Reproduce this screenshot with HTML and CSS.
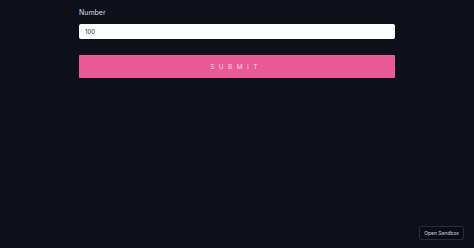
FILE: index.html
```html
<!DOCTYPE html>
<html lang="en">
<head>
    <meta charset="UTF-8">
    <meta name="viewport" content="width=device-width, initial-scale=1.0">
    <title>Number Form</title>
    <link rel="stylesheet" href="styles.css">
</head>
<body>
    <form class="form">
        <label for="number">Number</label>
        <input type="text" id="number" value="100">
        <button type="submit" class="btn">Submit</button>
    </form>

    <a href="#" class="sandbox-link">Open Sandbox</a>
</body>
</html>
```

FILE: styles.css
```css
body {
    font-family: Inter, 'Liberation Sans', sans-serif;
    background: #0d101b;
    color: #e6e8ee;
    margin: 0;
    min-height: 100vh;
}

.form {
    width: 316px;
    margin: 0 auto;
    padding-top: 9px;
    display: flex;
    flex-direction: column;
}

label {
    font-size: 7px;
    color: #dcdfe6;
    margin-bottom: 7px;
    line-height: 8px;
}

input {
    box-sizing: border-box;
    height: 15px;
    padding: 0 6px;
    background: #fff;
    border: none;
    border-radius: 2px;
    color: #1a1a1a;
    font-size: 6px;
    font-family: inherit;
}

.btn {
    margin-top: 16px;
    height: 23px;
    background: #ea5b95;
    border: none;
    border-radius: 1px;
    color: #f7d7e4;
    font-size: 6.5px;
    font-family: inherit;
    text-transform: uppercase;
    letter-spacing: 4.4px;
    padding-left: 4px;
}

.sandbox-link {
    position: fixed;
    right: 10px;
    bottom: 8px;
    padding: 3px 4px;
    font-size: 5px;
    color: #d0d3da;
    text-decoration: none;
    background: #0b0d16;
    border: 1px solid #2a2d38;
    border-radius: 2px;
}
```
